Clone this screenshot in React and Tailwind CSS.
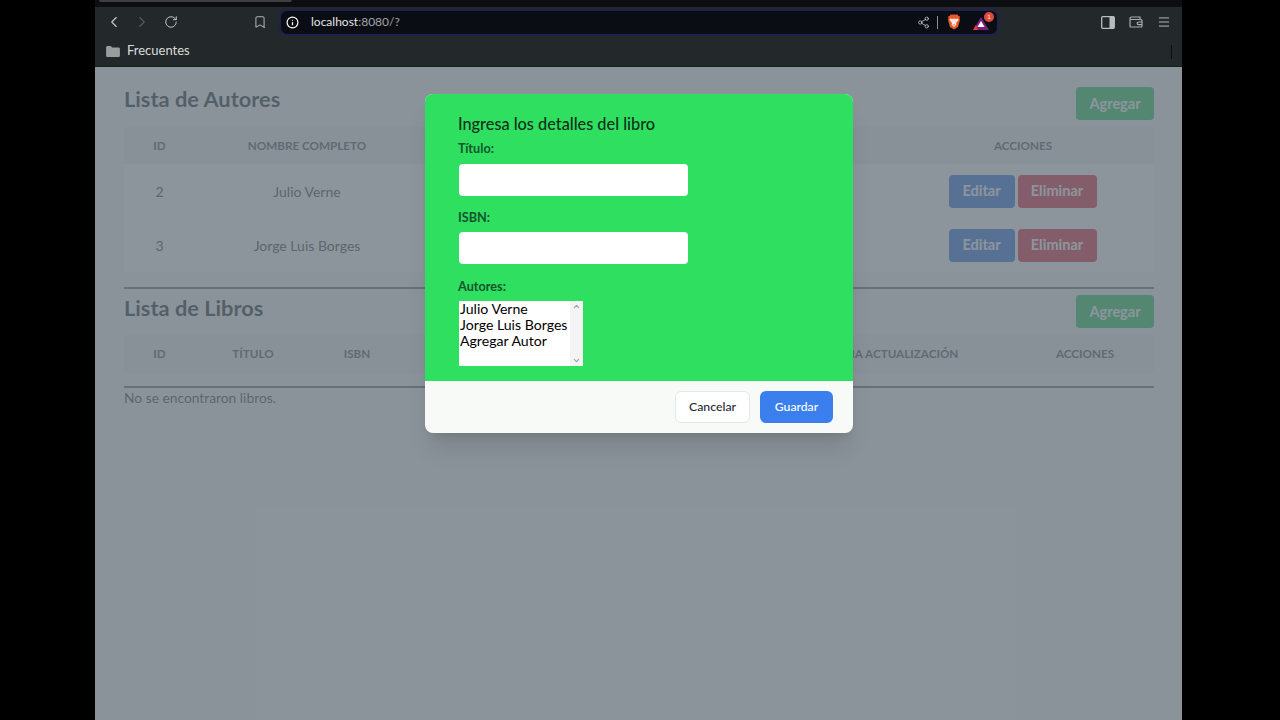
import React from 'react';
import { ChevronLeft, ChevronRight, RotateCw, Bookmark, Info, Share2, Menu, ChevronUp, ChevronDown } from 'lucide-react';

const font = { fontFamily: 'Lato, "Noto Sans", sans-serif' };

const autores = [
  { id: 2, nombre: 'Julio Verne' },
  { id: 3, nombre: 'Jorge Luis Borges' },
];

function BrowserBar() {
  return (
    <div className="shrink-0">
      <div className="h-[7px] bg-[#0c0e11]">
        <div className="ml-[4px] h-[2px] w-[193px] rounded-b bg-[#3b4043]" />
      </div>
      <div className="flex h-[30px] items-center bg-[#23282a] text-[#c9ccce]">
        <ChevronLeft className="ml-[10px] h-[18px] w-[18px]" strokeWidth={1.5} />
        <ChevronRight className="ml-[10px] h-[18px] w-[18px] text-[#565b5e]" strokeWidth={1.5} />
        <RotateCw className="ml-[13px] h-[14px] w-[14px]" strokeWidth={1.6} />
        <Bookmark className="ml-[75px] h-[14px] w-[14px]" strokeWidth={1.5} />
        <div className="ml-[12px] flex h-[27px] w-[720px] items-center rounded-lg border-2 border-[#20214d] bg-[#0b0d14]">
          <Info className="ml-[5px] h-[13px] w-[13px] text-white" strokeWidth={2.2} />
          <span className="ml-[12px] text-[12px] text-[#e4e5e6]">
            localhost<span className="text-[#a2a5a8]">:8080/?</span>
          </span>
          <Share2 className="ml-auto h-[13px] w-[13px]" strokeWidth={1.5} />
          <div className="ml-[7px] h-[13px] w-px bg-[#8b8e90]" />
          <svg className="ml-[9px] h-[16px] w-[14px]" viewBox="0 0 14 16">
            <path d="M3.500 0.500h7l1 1.500 1.500 0.500-0.500 2 0.500 1.500-2 7-4 2.500-4-2.500-2-7 0.500-1.500-0.500-2L2.500 2z" fill="#e8582a" />
            <path d="M3 4.500l2.500 0.500L7 4.500l1.500 0.500 2.500-0.500 0.500 1.500-2.500 3 0.500 1.500-2.500 2.500-2.500-2.500 0.500-1.500-2.500-3z" fill="#fbe7dc" />
            <path d="M5.800 10.500h2.400L7 11.700z" fill="#e8582a" />
          </svg>
          <div className="relative ml-[12px] mr-[4px] h-[16px] w-[20px]">
            <svg className="absolute bottom-0 left-0 h-[13px] w-[16px]" viewBox="0 0 16 13">
              <path d="M8 0l8 13H0z" fill="#7a1f7d" />
              <path d="M8 4l3.600 6H4.400z" fill="#fff" />
              <path d="M0 13l3-5 2 5z" fill="#e8402f" />
            </svg>
            <span className="absolute -top-[2px] right-[-1px] flex h-[10px] w-[10px] items-center justify-center rounded-full bg-[#e2493b] text-[6px] leading-none text-white">
              1
            </span>
          </div>
        </div>
        <svg className="ml-[102px] h-[13px] w-[14px]" viewBox="0 0 14 13" fill="none">
          <rect x="0.700" y="0.700" width="12.600" height="11.600" rx="1" stroke="#b9bcbe" strokeWidth="1.300" />
          <rect x="8.500" y="1" width="4.500" height="11" fill="#b9bcbe" />
        </svg>
        <svg className="ml-[14px] h-[12px] w-[14px]" viewBox="0 0 14 12" fill="none" stroke="#a9acae" strokeWidth="1.200">
          <path d="M1 3.500V10a1 1 0 0 0 1 1h10a1 1 0 0 0 1-1V4.500a1 1 0 0 0-1-1H2a1 1 0 0 1-1-1 1.500 1.500 0 0 1 1.500-1.500H11v2.500" />
          <path d="M13 6H9.500a1.300 1.300 0 0 0 0 2.600H13" />
        </svg>
        <Menu className="ml-[14px] h-[14px] w-[14px]" strokeWidth={1.5} />
      </div>
      <div className="flex h-[30px] items-center border-b border-[#1a1e20] bg-[#23282a]">
        <svg className="mb-[1px] ml-[11px] h-[11px] w-[14px]" viewBox="0 0 15 12">
          <path d="M0 1.500A1.500 1.500 0 0 1 1.500 0H5l1.500 1.500h7A1.500 1.500 0 0 1 15 3v7.500a1.500 1.500 0 0 1-1.500 1.500h-12A1.500 1.500 0 0 1 0 10.500z" fill="#9a9d9f" />
        </svg>
        <span className="mb-[2px] ml-[7px] text-[13px] text-[#d9dbdc]">Frecuentes</span>
        <div className="ml-auto mr-[10px] h-[14px] w-px bg-[#0c0e11]" />
      </div>
    </div>
  );
}

function Header({ children, className = '' }) {
  return (
    <th className={`whitespace-nowrap py-0 text-center text-[11.700px] font-bold uppercase text-[#4b5563] ${className}`}>
      {children}
    </th>
  );
}

function AutoresTable() {
  return (
    <table className="w-full table-fixed border-collapse">
      <colgroup>
        <col className="w-[71px]" />
        <col className="w-[224px]" />
        <col />
        <col className="w-[262px]" />
      </colgroup>
      <thead className="bg-[#eef0f2]">
        <tr className="h-[37px]">
          <Header>ID</Header>
          <Header>Nombre completo</Header>
          <Header>Nacionalidad</Header>
          <Header>Acciones</Header>
        </tr>
      </thead>
      <tbody className="bg-white">
        {autores.map((a) => (
          <tr key={a.id} className="h-[54px] text-center text-[14px] text-[#374151]">
            <td>{a.id}</td>
            <td>{a.nombre}</td>
            <td />
            <td>
              <div className="flex justify-center gap-[3px] pr-[1px]">
                <button className="h-[33px] w-[66px] rounded bg-[#2f6fe8] text-[14.500px] font-bold text-white">Editar</button>
                <button className="h-[33px] w-[79px] rounded bg-[#e02040] text-[14.500px] font-bold text-white">Eliminar</button>
              </div>
            </td>
          </tr>
        ))}
      </tbody>
    </table>
  );
}

function LibrosTable() {
  return (
    <table className="w-full table-fixed border-collapse">
      <colgroup>
        <col className="w-[71px]" />
        <col className="w-[116px]" />
        <col className="w-[92px]" />
        <col />
        <col className="w-[200px]" />
        <col className="w-[138px]" />
      </colgroup>
      <thead className="bg-[#eef0f2]">
        <tr className="h-[38px]">
          <Header>ID</Header>
          <Header>Título</Header>
          <Header>ISBN</Header>
          <Header>Autores</Header>
          <Header className="pr-[54px]">Última actualización</Header>
          <Header>Acciones</Header>
        </tr>
      </thead>
    </table>
  );
}

function SectionTitle({ title, className }) {
  return (
    <div className={`flex items-start justify-between ${className}`}>
      <h2 className="text-[21.800px] font-bold leading-[28px] text-[#1f2937]">{title}</h2>
      <button className="h-[33px] w-[78px] rounded bg-[#22c55e] text-[14.500px] font-bold text-white">Agregar</button>
    </div>
  );
}

function Page() {
  return (
    <div className="relative flex-1 bg-[#f7f8f8] pl-[29px] pr-[28px] text-[#374151]">
      <SectionTitle title="Lista de Autores" className="h-[60px] pt-[18px] [&>button]:mt-[2px]" />
      <AutoresTable />
      <hr className="mt-[15px] border-t-2 border-[#6b7280]" />
      <SectionTitle title="Lista de Libros" className="h-[46px] pt-[5px] [&>button]:mt-[1px]" />
      <LibrosTable />
      <hr className="mt-[13px] border-t-2 border-[#6b7280]" />
      <p className="text-[13.800px] text-[#374151]">No se encontraron libros.</p>
    </div>
  );
}

function Modal() {
  return (
    <div className="absolute inset-0 bg-[#66727a]/75">
      <div className="absolute left-[330px] top-[27px] w-[428px] overflow-hidden rounded-lg bg-[#f8faf8] shadow-xl">
        <div className="h-[287px] bg-[#2fe060] pl-[33px] pt-[20px]">
          <h3 className="text-[16.300px] font-medium leading-[20px] text-[#0f2f1c]">Ingresa los detalles del libro</h3>
          <label className="mt-[6px] block text-[12.700px] font-bold leading-[16px] text-[#14532d]">Título:</label>
          <input className="ml-[1px] mt-[8px] block h-[32px] w-[229px] rounded-sm bg-white" type="text" />
          <label className="mt-[13px] block text-[12.700px] font-bold leading-[16px] text-[#14532d]">ISBN:</label>
          <input className="ml-[1px] mt-[7px] block h-[32px] w-[229px] rounded-sm bg-white" type="text" />
          <label className="mt-[14px] block text-[12.700px] font-bold leading-[16px] text-[#14532d]">Autores:</label>
          <div className="ml-[1px] mt-[7px] flex h-[65px] w-[124px] bg-white">
            <select multiple size={4} className="-mt-[1px] h-[66px] flex-1 overflow-hidden pl-[1px] text-[14.100px] text-black">
              <option className="h-[16px] min-h-0 p-0 leading-[16px]">Julio Verne</option>
              <option className="h-[16px] min-h-0 p-0 leading-[16px]">Jorge Luis Borges</option>
              <option className="h-[16px] min-h-0 p-0 leading-[16px]">Agregar Autor</option>
            </select>
            <div className="flex w-[13px] flex-col items-center justify-between bg-[#f3f4f3] py-[1px] text-[#9ca3a0]">
              <ChevronUp className="h-[9px] w-[9px]" strokeWidth={3} />
              <ChevronDown className="h-[9px] w-[9px]" strokeWidth={3} />
            </div>
          </div>
        </div>
        <div className="flex h-[52px] items-center justify-end gap-[10px] pr-[20px]">
          <button className="h-[32px] w-[75px] rounded-md border border-[#e5e7eb] bg-white text-[12.300px] font-medium text-[#1f2937]">Cancelar</button>
          <button className="h-[32px] w-[73px] rounded-md bg-[#3b7fee] text-[12.200px] font-medium text-white">Guardar</button>
        </div>
      </div>
    </div>
  );
}

export default function App() {
  return (
    <div className="h-[720px] w-[1280px] overflow-hidden bg-black pl-[95px]" style={font}>
      <div className="flex h-full w-[1087px] flex-col">
        <BrowserBar />
        <div className="relative flex flex-1 flex-col">
          <Page />
          <Modal />
        </div>
      </div>
    </div>
  );
}
